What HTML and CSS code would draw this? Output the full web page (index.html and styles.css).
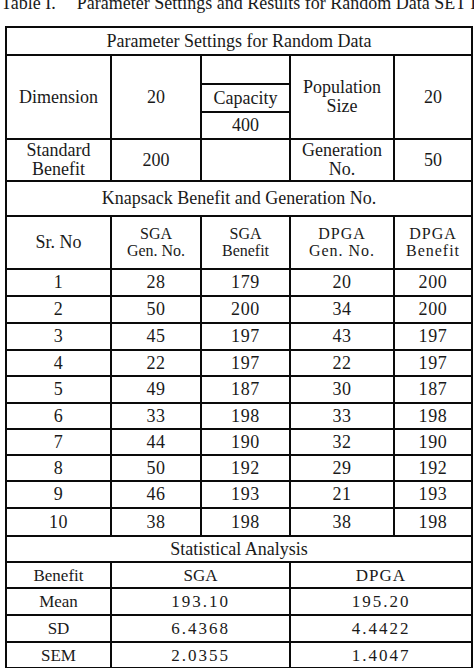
FILE: index.html
```html
<!DOCTYPE html>
<html>
<head>
<meta charset="utf-8">
<link rel="stylesheet" href="styles.css">
</head>
<body>
<div class="caption"><span class="label">Table I.</span>Parameter Settings and Results for Random Data SET I</div>
<div class="table">
  <div class="cell span5">Parameter Settings for Random Data</div>

  <div class="cell rows3">Dimension</div>
  <div class="cell rows3">20</div>
  <div class="cell"></div>
  <div class="cell rows3 two">Population<br>Size</div>
  <div class="cell rows3">20</div>
  <div class="cell">Capacity</div>
  <div class="cell">400</div>

  <div class="cell two">Standard<br>Benefit</div>
  <div class="cell">200</div>
  <div class="cell"></div>
  <div class="cell two">Generation<br>No.</div>
  <div class="cell">50</div>

  <div class="cell span5">Knapsack Benefit and Generation No.</div>

  <div class="cell">Sr. No</div>
  <div class="cell head">SGA<br>Gen. No.</div>
  <div class="cell head">SGA<br>Benefit</div>
  <div class="cell head sp">DPGA<br>Gen. No.</div>
  <div class="cell head sp">DPGA<br>Benefit</div>

  <div class="cell num">1</div><div class="cell num">28</div><div class="cell num">179</div><div class="cell num">20</div><div class="cell num">200</div>
  <div class="cell num">2</div><div class="cell num">50</div><div class="cell num">200</div><div class="cell num">34</div><div class="cell num">200</div>
  <div class="cell num">3</div><div class="cell num">45</div><div class="cell num">197</div><div class="cell num">43</div><div class="cell num">197</div>
  <div class="cell num">4</div><div class="cell num">22</div><div class="cell num">197</div><div class="cell num">22</div><div class="cell num">197</div>
  <div class="cell num">5</div><div class="cell num">49</div><div class="cell num">187</div><div class="cell num">30</div><div class="cell num">187</div>
  <div class="cell num">6</div><div class="cell num">33</div><div class="cell num">198</div><div class="cell num">33</div><div class="cell num">198</div>
  <div class="cell num">7</div><div class="cell num">44</div><div class="cell num">190</div><div class="cell num">32</div><div class="cell num">190</div>
  <div class="cell num">8</div><div class="cell num">50</div><div class="cell num">192</div><div class="cell num">29</div><div class="cell num">192</div>
  <div class="cell num">9</div><div class="cell num">46</div><div class="cell num">193</div><div class="cell num">21</div><div class="cell num">193</div>
  <div class="cell num">10</div><div class="cell num">38</div><div class="cell num">198</div><div class="cell num">38</div><div class="cell num">198</div>

  <div class="cell span5">Statistical Analysis</div>

  <div class="cell stat">Benefit</div>
  <div class="cell stat span2">SGA</div>
  <div class="cell stat span2 sp">DPGA</div>

  <div class="cell stat">Mean</div>
  <div class="cell stat span2 wide">193.10</div>
  <div class="cell stat span2 wide">195.20</div>

  <div class="cell stat">SD</div>
  <div class="cell stat span2 wide">6.4368</div>
  <div class="cell stat span2 wide">4.4422</div>

  <div class="cell stat">SEM</div>
  <div class="cell stat span2 wide">2.0355</div>
  <div class="cell stat span2 wide">1.4047</div>
</div>
</body>
</html>
```

FILE: styles.css
```css
html, body {
  margin: 0;
  padding: 0;
  background: #ffffff;
}

body {
  font-family: "Liberation Serif", "Times New Roman", serif;
  color: #1a1a1a;
  overflow: hidden;
}

.caption {
  margin-top: -6px;
  height: 18px;
  font-size: 18px;
  line-height: 18px;
  white-space: nowrap;
  padding-left: 1px;
}

.caption .label {
  display: inline-block;
  margin-right: 21px;
}

.table {
  margin-top: 14px;
  margin-left: 5px;
  width: 468px;
  box-sizing: border-box;
  display: grid;
  grid-template-columns: 103px 88px 87px 102px 76px;
  grid-template-rows: 26px 27px 26px 25px 40px 33px 51px 25px 25px 25px 24px 25px 24px 24px 24px 25px 26px 24px 24px 25px 25px 24px;
  gap: 2px;
  padding: 2px;
  background: #0a0a0a;
}

.cell {
  background: #ffffff;
  display: flex;
  flex-direction: column;
  align-items: center;
  justify-content: center;
  text-align: center;
  font-size: 18px;
  line-height: 19px;
  white-space: nowrap;
}

.span5 { grid-column: span 5; }
.span2 { grid-column: span 2; }
.rows3 { grid-row: span 3; }

.two { line-height: 19px; }

.head {
  font-size: 16px;
  line-height: 17px;
  padding-bottom: 1px;
}

.sp { letter-spacing: 1px; }

.num { letter-spacing: 0.6px; }

.stat { font-size: 17px; }

.wide { letter-spacing: 2px; }
```
